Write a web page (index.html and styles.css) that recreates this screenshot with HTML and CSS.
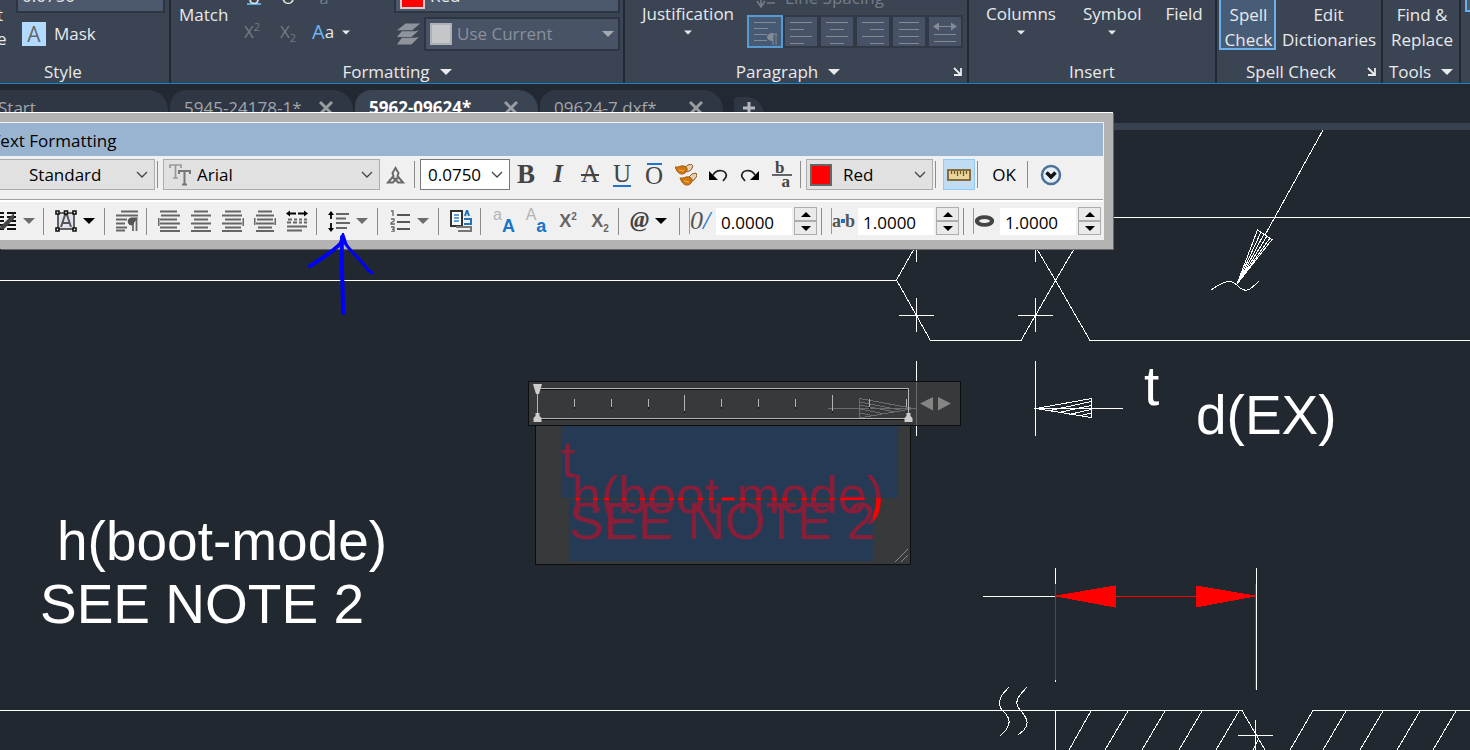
FILE: index.html
```html
<!DOCTYPE html>
<html lang="en">
<head>
<meta charset="utf-8">
<title>Text Editor</title>
<link rel="stylesheet" href="styles.css">
</head>
<body>
<svg class="defs" aria-hidden="true">
  <symbol id="caret" viewBox="0 0 12 6"><path d="M0 0h12L6 6z" fill="currentColor"/></symbol>
  <symbol id="chevron" viewBox="0 0 12 8"><path d="M1 1l5 5 5-5" fill="none" stroke="currentColor" stroke-width="1.3"/></symbol>
  <symbol id="launcher" viewBox="0 0 9 9"><path d="M1 1l6 6M8 1v7H1" fill="none" stroke="currentColor" stroke-width="1.8"/></symbol>
  <symbol id="close" viewBox="0 0 14 14"><path d="M1 1l12 12M13 1L1 13" fill="none" stroke="currentColor" stroke-width="3"/></symbol>
</svg>
<div class="app">
  <header class="ribbon">
    <section class="panel">
      <div class="panel-body style-body">
        <div class="clipped-label"><span>t</span><span>e</span></div>
        <div class="style-controls">
          <div class="combo combo-top"><select aria-label="Text height"><option>0.0750</option></select><svg class="caret dim"><use href="#caret"/></svg></div>
          <button class="mask"><span class="mask-icon">A</span>Mask</button>
        </div>
      </div>
      <h2 class="panel-title style-title">Style</h2>
    </section>
    <section class="panel">
      <div class="panel-body format-body">
        <button class="label-btn match">Match</button>
        <div class="glyphs">
          <button class="glyph under">U</button><button class="glyph over">O</button><button class="glyph faint small">a</button>
          <button class="glyph faint">X<sup>2</sup></button><button class="glyph faint">X<sub>2</sub></button>
          <button class="glyph case"><b>A</b><i>a</i><svg class="caret-sm"><use href="#caret"/></svg></button>
        </div>
        <div class="format-combos">
          <div class="combo combo-top"><span class="swatch red"></span><select aria-label="Colour"><option>Red</option></select></div>
          <div class="layer-row">
            <svg class="layers" viewBox="0 0 24 22" fill="#8f949a"><path d="M9 0h15l-8 7H0zM5 8h14l4-1-8 7H0zM5 15h14l4-1-8 8H0z"/></svg>
            <div class="combo combo-dim"><span class="swatch grey"></span><select aria-label="Layer"><option>Use Current</option></select><svg class="caret dim"><use href="#caret"/></svg></div>
          </div>
        </div>
      </div>
      <h2 class="panel-title">Formatting <svg class="caret"><use href="#caret"/></svg></h2>
    </section>
    <section class="panel">
      <div class="panel-body para-body">
        <button class="label-btn stacked">Justification<svg class="caret-sm"><use href="#caret"/></svg></button>
        <div class="para-tools">
          <button class="spacing-btn"><svg viewBox="0 0 20 20"><path d="M6 2v16M2 13l4 6 4-6M12 15h9M12 9h9" fill="none" stroke="#757b85" stroke-width="1.6"/></svg>Line Spacing</button>
          <div class="align-row">
            <button class="tile on" aria-label="Default"><svg viewBox="0 0 24 24"><path d="M1 2.500h22M1 8.500h14M1 14.500h13M1 20.500h13M20 14v12M23 14v12M17 14h7"/><path class="fill" d="M20 13c-8 0-8 8 0 8z"/></svg></button>
            <button class="tile" aria-label="Left"><svg viewBox="0 0 24 24"><path d="M1 2.500h22M1 9.500h14M1 16.500h22M1 23.500h14"/></svg></button>
            <button class="tile" aria-label="Center"><svg viewBox="0 0 24 24"><path d="M1 2.500h22M5 9.500h14M1 16.500h22M5 23.500h14"/></svg></button>
            <button class="tile" aria-label="Right"><svg viewBox="0 0 24 24"><path d="M1 2.500h22M9 9.500h14M1 16.500h22M9 23.500h14"/></svg></button>
            <button class="tile" aria-label="Justify"><svg viewBox="0 0 24 24"><path d="M2 2.500h20M2 9.500h20M2 16.500h20M2 23.500h20"/></svg></button>
            <button class="tile" aria-label="Distribute"><svg viewBox="0 0 24 24"><path d="M3 6.500h18M1 14.500h22M1 21.500h22"/><path class="fill" d="M0 6.500l6-4v8zM24 6.500l-6-4v8z"/></svg></button>
          </div>
        </div>
      </div>
      <h2 class="panel-title"><span class="grow">Paragraph <svg class="caret"><use href="#caret"/></svg></span><svg class="launcher"><use href="#launcher"/></svg></h2>
    </section>
    <section class="panel">
      <div class="panel-body insert-body">
        <button class="label-btn stacked">Columns<svg class="caret-sm"><use href="#caret"/></svg></button>
        <button class="label-btn stacked">Symbol<svg class="caret-sm"><use href="#caret"/></svg></button>
        <button class="label-btn stacked">Field</button>
      </div>
      <h2 class="panel-title">Insert</h2>
    </section>
    <section class="panel">
      <div class="panel-body spell-body">
        <button class="big-btn on">Spell Check</button>
        <button class="big-btn">Edit Dictionaries</button>
      </div>
      <h2 class="panel-title"><span class="grow">Spell Check</span><svg class="launcher"><use href="#launcher"/></svg></h2>
    </section>
    <section class="panel">
      <div class="panel-body tools-body"><button class="big-btn">Find &amp; Replace</button></div>
      <h2 class="panel-title">Tools <svg class="caret"><use href="#caret"/></svg></h2>
    </section>
    <section class="panel"><div class="edge-btn"></div></section>
  </header>

  <nav class="tabs">
    <div class="tab start">Start</div>
    <div class="tab">5945-24178-1*<svg class="close"><use href="#close"/></svg></div>
    <div class="tab active">5962-09624*<svg class="close"><use href="#close"/></svg></div>
    <div class="tab">09624-7.dxf*<svg class="close"><use href="#close"/></svg></div>
    <button class="new-tab" aria-label="New tab"><svg viewBox="0 0 14 14"><path d="M7 1v12M1 7h12" stroke="#b4b7ba" stroke-width="3"/></svg></button>
  </nav>

  <main class="canvas">
    <svg class="drawing" viewBox="0 130 1470 620">
      <g class="line">
        <path d="M1100 217.500H1470M0 280.500H896M896.500 280L914 249M896.500 280L930.500 340.500H1021L1055.500 280.500L1074 249M1037 249L1055.500 280.500L1090 340.500H1470"/>
        <path d="M899 315.500H934M916.500 298V332M1018 315.500H1053M1035.500 298V332M916.500 249V262M1035.500 249V262M916.500 361V436M1035.500 361V436"/>
        <path d="M1034 408.500H1123M1036 408.500L1091.500 398.500V417.500ZM1048 411L1091 401.500M1059 412.500L1091 405.500M1069 414.500L1091 409.500M1079 416L1091 413"/>
        <path d="M1323 130L1265 235M1257.500 230L1272 239.500L1237 284ZM1261 232L1238 282M1264 234L1239 281M1267 236L1240 280M1270 238L1243 276"/>
        <path d="M1211 290C1224 281 1231 278 1239 287C1246 294 1251 289 1259 281"/>
        <path d="M983 596.500H1055M1055.500 568V584M1055.500 680V682M1256.500 568V690"/>
        <path d="M1009 687L1002 695C998 701 999 708 1004 712C1011 719 1010 724 1006 730L1000 736M1027 687L1020 695C1015 701 1016 706 1021 711C1029 720 1028 725 1024 730L1018 735"/>
        <path d="M0 710.500H1242L1265 750M1055.500 710V750M1091 711L1069 750M1128 711L1105 750M1165 711L1142 750M1202 711L1179 750M1239 711L1216 750M1238 735.500H1273M1255.500 720V750M1258 740L1253 750"/>
        <path d="M1290 750L1313 710.500H1470M1346 711L1323 750M1383 711L1360 750M1420 711L1397 750M1456 711L1433 750"/>
      </g>
      <g class="dimension">
        <path d="M1055.500 584V680M1255.500 584V689M1056 596.500H1255"/>
        <path class="solid" d="M1056 596L1115 586V607ZM1255 596L1196 586V607Z"/>
      </g>
      <g class="cad-text">
        <text x="57" y="560">h(boot-mode)</text>
        <text x="40" y="623">SEE NOTE 2</text>
        <text x="1144" y="405">t</text>
        <text x="1196" y="434">d(EX)</text>
      </g>
      <g>
        <rect class="box" x="535.500" y="425.500" width="375" height="139"/>
        <g class="edit-text">
          <text x="561" y="477">t</text>
          <text x="572" y="513">h(boot-mode)</text>
          <text x="569" y="539">SEE NOTE 2</text>
        </g>
        <rect class="selection" x="561" y="426" width="337" height="72"/>
        <rect class="selection" x="569" y="500" width="304" height="61"/>
        <path class="grip" d="M895 562L908 549M901 562L908 555"/>
        <rect class="box" x="528.500" y="381.500" width="432" height="44"/>
        <path class="ghost" d="M828 408.500H916M916.500 382V425M859.500 398.500V418L914 408.500ZM860 402L905 411M860 405L895 412M860 409L885 414M860 413L875 416"/>
        <path class="shade" d="M538 389.500H908M538 419.500H908M574.500 407v2M611.500 407v2M648.500 407v2M684.500 411v2M721.500 407v2M758.500 407v2M795.500 407v2M832.500 411v2M869.500 407v2"/>
        <path class="ruler" d="M537.500 388.500H908.500V418.500H537.500ZM574.500 399v8M611.500 399v8M648.500 399v8M684.500 395v16M721.500 399v8M758.500 399v8M795.500 399v8M832.500 395v16M869.500 399v8M906.500 399v8"/>
        <path class="marker" d="M533 384h9l-3 10h-3zM533.500 422v-4l2-2v-3h4v3l2 2v4zM904.500 422v-4l2-2v-3h4v3l2 2v4z"/>
        <path class="arrows" d="M920 403.500L933 397V410.500ZM951 403.500L938 397V410.500Z"/>
      </g>
    </svg>
  </main>

  <div class="palette">
    <div class="palette-title">Text Formatting</div>
    <div class="bar">
      <div class="drop style-drop"><select aria-label="Style"><option>Standard</option></select><svg class="chevron"><use href="#chevron"/></svg></div>
      <span class="sep"></span>
      <div class="drop font-drop"><svg class="tt" viewBox="0 0 22 22"><path d="M1 4V1h11v3M6.500 1v13M4 14h5" fill="none" stroke="#999" stroke-width="1.700"/><path d="M10 10V7h11v3M15.500 7v13M13 20.500h5" fill="none" stroke="#777" stroke-width="2"/></svg><select aria-label="Font"><option>Arial</option></select><svg class="chevron"><use href="#chevron"/></svg></div>
      <button class="tool" aria-label="Annotative"><svg viewBox="0 0 22 22"><path d="M10.500 4L7.500 9l1 3L3 18.500h5l2.500-3 2.500 3h5L12.500 12l1-3zM8 14.500h5" fill="none" stroke="#6a6a6a" stroke-width="2"/></svg></button>
      <span class="sep"></span>
      <div class="drop size-drop"><select aria-label="Height"><option>0.0750</option></select><svg class="chevron"><use href="#chevron"/></svg></div>
      <button class="tool serif bold">B</button>
      <button class="tool serif italic">I</button>
      <button class="tool serif strike">A</button>
      <button class="tool serif ul">U</button>
      <button class="tool serif ol">O</button>
      <button class="tool" aria-label="Match format"><svg viewBox="0 0 22 22"><path d="M9 4l4-3 3-1 2 2-2 4-4 2zM13 14l4-4 4-1 1 3-3 4-3 1z" fill="#e8d0b8" stroke="#8c5a22"/><path d="M0 3c3 1 6-2 9-1 4 1 4 5 1 7-3 2-6 1-8-2zM5 14c3 1 6-2 9-1 4 1 4 5 1 7-3 2-6 1-8-2z" fill="#cf780f" stroke="#a0580a"/><path d="M4 6l5 1M9 17l5 1" stroke="#f0b45a"/></svg></button>
      <button class="tool" aria-label="Undo"><svg viewBox="0 0 22 22"><path d="M6 11c4-7 15-5 13 2l-3 4" fill="none" stroke="#222" stroke-width="1.700"/><path d="M2 7v9h9z"/></svg></button>
      <button class="tool" aria-label="Redo"><svg viewBox="0 0 22 22"><path d="M16 11C12 4 1 6 3 13l3 4" fill="none" stroke="#222" stroke-width="1.700"/><path d="M20 7v9h-9z"/></svg></button>
      <button class="tool fraction" aria-label="Stack"><span>b</span><span>a</span></button>
      <span class="sep"></span>
      <div class="drop color-drop"><span class="color-swatch"></span><select aria-label="Color"><option>Red</option></select><svg class="chevron"><use href="#chevron"/></svg></div>
      <span class="sep"></span>
      <button class="tool pressed" aria-label="Ruler"><svg class="wide" viewBox="0 0 24 14"><rect x="1" y="2" width="22" height="10" fill="#e8d69c" stroke="#80612f" stroke-width="1.800"/><path d="M4.500 3v3M7.500 3v3M10.500 3v5M13.500 3v3M16.500 3v5M19.500 3v3" stroke="#725727" stroke-width="1.300"/></svg></button>
      <span class="sep"></span>
      <button class="ok">OK</button>
      <span class="sep"></span>
      <button class="tool more" aria-label="Options"><svg viewBox="0 0 22 22"><circle cx="11" cy="11" r="9" fill="#e6eef7" stroke="#4b7199" stroke-width="2.500"/><path d="M6.500 8.500L11 13l4.500-4.500" fill="none" stroke="#111" stroke-width="3.500"/></svg></button>
    </div>
    <div class="bar second">
      <button class="tool first" aria-label="Columns"><svg viewBox="0 0 22 22"><path d="M1 3h8M1 7h8M1 11h8M1 15h8M1 19h8M12 3h9M12 7h9M12 11h9M12 15h9M12 19h9" stroke="#111" stroke-width="2"/><path d="M4 18L19 3v6L9 19H4z" fill="#444"/></svg><svg class="caret mid"><use href="#caret"/></svg></button>
      <span class="sep"></span>
      <button class="tool menu" aria-label="Justification"><svg viewBox="0 0 22 22"><path d="M3 3h16v16H3z" fill="#dfe3ee" stroke="#333" stroke-width="1.500"/><path d="M6 17l4-12h2l4 12M8 13h6" fill="none" stroke="#555" stroke-width="2"/><path d="M1 1h3v3H1zM9.500 1h3v3h-3zM18 1h3v3h-3zM1 18h3v3H1zM18 18h3v3h-3z" fill="#fff" stroke="#111" stroke-width="1.600"/></svg><svg class="caret"><use href="#caret"/></svg></button>
      <span class="sep"></span>
      <button class="tool w34" aria-label="Paragraph"><svg viewBox="0 0 22 22"><path d="M5 1.500h17M0 5.500h22M0 9.500h11M0 13.500h9M0 17.500h11M0 20.500h9M17 8v13M20.500 8v13" stroke="#666" stroke-width="1.800"/><path d="M22 7.500h-7c-5 1-4 8 1 8z" fill="#555"/></svg></button>
      <span class="sep"></span>
      <div class="group aligns">
        <button class="tool" aria-label="Align left"><svg class="lines" viewBox="0 0 22 22"><path d="M2 1.500h17M3 5.500h19M2 9.500h17M2 13.500h20M2 17.500h17M2 21h20M.5 8v8"/></svg></button>
        <button class="tool" aria-label="Align center"><svg class="lines" viewBox="0 0 22 22"><path d="M4 1.500h14M1 5.500h20M4 9.500h14M1 13.500h20M4 17.500h14M1 21h20"/></svg></button>
        <button class="tool" aria-label="Align right"><svg class="lines" viewBox="0 0 22 22"><path d="M3 1.500h16M0 5.500h20M3 9.500h16M0 13.500h20M3 17.500h16M0 21h20M21.500 8v8"/></svg></button>
        <button class="tool" aria-label="Justify"><svg class="lines" viewBox="0 0 22 22"><path d="M4 1.500h14M2 5.500h18M3 9.500h16M2 13.500h18M4 17.500h14M2 21h18M.5 8v7M21.500 8v7"/></svg></button>
        <button class="tool" aria-label="Distribute"><svg class="lines" viewBox="0 0 22 22"><path d="M1 16.500h20M1 20.500h15M2 9.500h4M8 9.500h3M13 9.500h3M18 9.500h3M1 12.500h4M7 12.500h4M13 12.500h3M18 12.500h3"/><path class="ends" d="M2 3.500h8M12 3.500h8"/><path class="heads" d="M0 3.500l4-3v6zM22 3.500l-4-3v6z"/></svg></button>
      </div>
      <span class="sep"></span>
      <button class="tool menu" aria-label="Line spacing"><svg viewBox="0 0 22 22"><path d="M3 2v7M3 13v7" stroke="#000" stroke-width="1.800"/><path d="M0 5l3-4 3 4zM0 18l3 4 3-4z"/><path d="M8 4h13M8 8.500h10M8 13h14M8 18h11" stroke="#666" stroke-width="2"/></svg><svg class="caret mid"><use href="#caret"/></svg></button>
      <span class="sep"></span>
      <button class="tool menu" aria-label="Numbering"><svg viewBox="0 0 22 22"><path d="M8 5h13M8 12h13M8 19h13" stroke="#555" stroke-width="2"/><path d="M2 1h2v5M2 9h3v2l-3 2v1h4M2 17h3v5H2M3 19.500h2" fill="none" stroke="#666" stroke-width="1.300"/></svg><svg class="caret mid"><use href="#caret"/></svg></button>
      <span class="sep"></span>
      <button class="tool w34" aria-label="Insert field"><svg viewBox="0 0 22 22"><path d="M1 1h11v15H1z" fill="#fff" stroke="#333" stroke-width="2"/><path d="M4 5h5M4 8h5M4 11h5" stroke="#2a83cf" stroke-width="1.500"/><path d="M15 6l2-6 2 6M14 9h7v5h-7" fill="none" stroke="#2273bd" stroke-width="2"/><path d="M6 17h15v4H8" fill="none" stroke="#777" stroke-width="2"/></svg></button>
      <span class="sep"></span>
      <div class="group cases">
        <button class="tool pair" aria-label="Uppercase"><small>a</small><b>A</b></button>
        <button class="tool pair" aria-label="Lowercase"><small>A</small><b>a</b></button>
        <button class="tool script"><span>X<sup>2</sup></span></button>
        <button class="tool script"><span>X<sub>2</sub></span></button>
      </div>
      <span class="sep"></span>
      <button class="tool menu at"><span>@</span><svg class="caret"><use href="#caret"/></svg></button>
      <span class="sep"></span>
      <label class="spin"><span class="spin-icon oblique">0<i>/</i></span><input type="text" value="0.0000" aria-label="Oblique angle"><span class="steps"><button aria-label="Up"><svg><use href="#caret"/></svg></button><button aria-label="Down"><svg><use href="#caret"/></svg></button></span></label>
      <span class="sep"></span>
      <label class="spin"><span class="spin-icon tracking">a<i></i>b</span><input type="text" value="1.0000" aria-label="Tracking"><span class="steps"><button aria-label="Up"><svg><use href="#caret"/></svg></button><button aria-label="Down"><svg><use href="#caret"/></svg></button></span></label>
      <span class="sep"></span>
      <label class="spin"><span class="spin-icon"><svg viewBox="0 0 22 14"><ellipse cx="11" cy="7" rx="8" ry="4" fill="#f0f0f0" stroke="#444" stroke-width="4"/><path d="M1.500 7a4 4 0 0 1 4-4v8a4 4 0 0 1-4-4zM20.500 7a4 4 0 0 0-4-4v8a4 4 0 0 0 4-4z" fill="#444"/></svg></span><input type="text" value="1.0000" aria-label="Width factor"><span class="steps"><button aria-label="Up"><svg><use href="#caret"/></svg></button><button aria-label="Down"><svg><use href="#caret"/></svg></button></span></label>
    </div>
  </div>

  <svg class="pointer" viewBox="0 0 72 84" aria-hidden="true"><path d="M36 4C35 30 37 52 37 80" stroke-width="4"/><path d="M4 33C15 26 27 19 36 9" stroke-width="4"/><path d="M37 7C44 19 55 26 62 37L66 40" stroke-width="3"/><path d="M34 12l3-10 3 9" stroke-width="3"/></svg>
</div>
</body>
</html>
```
FILE: styles.css
```css
* { box-sizing: border-box; }
body { margin: 0; font-family: "Open Sans", "Noto Sans", sans-serif; font-size: 17px; line-height: 24px; color: #e8eaec; background: #212830; }
button, select, input { font: inherit; color: inherit; margin: 0; padding: 0; border: 0; background: none; }
select { appearance: none; min-width: 0; flex: 1; outline: 0; }
button { white-space: nowrap; }
svg { display: block; flex: none; }
.defs { position: absolute; width: 0; height: 0; }
.app { position: relative; display: flex; flex-direction: column; height: 100vh; overflow: hidden; }

/* Ribbon */
.ribbon { display: grid; grid-template-columns: 169fr 452fr 342fr 246fr 164fr 76fr 9fr; gap: 2px; flex: none; background: #222933; border-bottom: 1px solid #1186c2; }
.panel { display: flex; flex-direction: column; min-width: 0; background: #3b4453; overflow: hidden; }
.panel-body { display: flex; align-items: flex-start; height: 60px; }
.panel-title { display: flex; align-items: center; justify-content: center; gap: 10px; margin: 0; height: 23px; font-size: 17px; font-weight: 400; }
.style-title { justify-content: flex-start; padding-left: 44px; }
.grow { flex: 1; display: flex; align-items: center; justify-content: center; gap: 10px; padding-left: 8px; }
.caret { width: 12px; height: 6px; }
.caret-sm { width: 8px; height: 5px; }
.dim { color: #a4a9b0; }
.launcher { width: 9px; height: 9px; margin-right: 5px; }
.label-btn { height: 24px; }
.combo { display: flex; align-items: center; gap: 5px; padding: 0 4px; height: 34px; background: #4c586c; border: 2px solid #2d3543; }
.combo-top { margin-top: -21px; }
.style-controls { flex: 1; display: flex; flex-direction: column; gap: 9px; padding-right: 4px; }
.clipped-label { display: flex; flex-direction: column; width: 16px; padding-top: 3px; text-indent: -3px; }
.mask { display: flex; align-items: center; gap: 8px; padding-left: 6px; }
.mask-icon { width: 24px; height: 24px; background: #b1dcff; color: #63676c; font-size: 21px; }
.format-body { padding: 0 3px 0 8px; }
.match { margin-top: 3px; width: 56px; text-align: left; }
.glyphs { display: grid; grid-template-columns: 36px 36px 50px; row-gap: 10px; margin-top: -14px; align-items: end; padding-left: 1px; }
.glyph { height: 24px; width: 32px; }
.glyph.faint { color: #757c87; }
.glyph sup, .glyph sub { font-size: 11px; line-height: 0; }
.under { border-bottom: 2px solid #59a9e8; width: 14px; justify-self: center; height: 19px; margin-bottom: 5px; }
.case { display: flex; align-items: center; width: 50px; font-size: 20px; padding-left: 4px; }
.case b { color: #6ab8f7; font-weight: 400; }
.case i { font-style: normal; font-size: 17px; margin-right: 8px; }
.format-combos { flex: 1; margin-left: 36px; min-width: 0; display: flex; flex-direction: column; gap: 4px; }
.swatch { width: 25px; height: 25px; border: 2px solid #d8d0d0; }
.red { background: #f00; }
.grey { width: 22px; height: 22px; background: #c4c6ca; border-color: #adb0b5; }
.layer-row { display: flex; align-items: center; gap: 4px; padding-left: 3px; }
.layers { width: 23px; height: 22px; }
.combo-dim { flex: 1; color: #89909b; background: #485366; }
.para-body { padding-left: 17px; }
.stacked { display: flex; flex-direction: column; align-items: center; gap: 4px; height: 40px; margin-top: 2px; }
.para-tools { display: flex; flex-direction: column; margin-left: 13px; }
.spacing-btn { display: flex; align-items: center; gap: 10px; margin-top: -14px; padding-left: 8px; color: #757c87; height: 24px; }
.spacing-btn svg { width: 20px; height: 20px; }
.align-row { display: flex; margin-top: 5px; }
.tile { width: 36px; height: 33px; display: flex; align-items: center; justify-content: center; background: #475266; border: 2px solid #313947; }
.tile svg { width: 24px; height: 26px; stroke: #858b95; fill: none; }
.tile .fill { fill: #858b95; stroke: none; }
.tile.on { background: #465a75; border-color: #579ad0; }
.insert-body { padding-left: 17px; gap: 27px; }
.insert-body .stacked:last-child { margin-left: -3px; }
.spell-body { padding-left: 2px; gap: 6px; }
.big-btn { white-space: normal; line-height: 25px; height: 50px; padding-top: 2px; }
.spell-body .big-btn { width: 57px; }
.spell-body .big-btn.on { padding-left: 2px; }
.spell-body .big-btn + .big-btn { flex: 1; margin-right: 6px; }
.big-btn.on { background: #475c76; border: 2px solid #6bb0ea; border-top: 0; }
.tools-body { justify-content: center; padding-left: 2px; }
.tools-body .big-btn { width: 70px; }
.edge-btn { height: 12px; margin-left: 4px; border: solid #6bb0ea; border-width: 0 0 2px 2px; background: #475c76; }

/* Document tabs */
.tabs { display: flex; flex: none; height: 46px; padding-top: 6px; gap: 2px; background: #222933; border-bottom: 7px solid #38414f; }
.tab { display: flex; align-items: center; justify-content: space-between; width: 183px; padding: 2px 20px 0 14px; background: #2f3744; color: #a2a6ab; border-radius: 16px 20px 0 0; }
.tab.start { width: 168px; padding-left: 0; border-top-left-radius: 0; text-indent: -2px; }
.tab.active { background: #3b4453; color: #fff; font-weight: 700; }
.close { width: 14px; height: 14px; color: #999da2; }
.new-tab { display: flex; justify-content: center; width: 30px; height: 26px; margin: 7px 0 0 9px; padding-top: 4px; background: #2f3744; border-radius: 4px 18px 0 0; }
.new-tab svg { width: 14px; height: 14px; }

/* Drawing area */
.canvas { flex: 1; min-height: 0; overflow: hidden; }
.drawing { width: 100%; height: auto; }
.line, .dimension { fill: none; stroke: #fff; stroke-width: 1; shape-rendering: crispEdges; }
.dimension { stroke: #f00; }
.solid { fill: #f00; }
.cad-text { font: 55px "Liberation Sans", Arial, sans-serif; fill: #fff; }
.edit-text { font: 52px "Liberation Sans", Arial, sans-serif; fill: #f00; }
.box { fill: #38393a; stroke: #0b0d0f; }
.selection { fill: rgba(18, 60, 112, .5); }
.grip { stroke: #888; }
.ghost { fill: none; stroke: #6a6b6c; shape-rendering: crispEdges; }
.shade { fill: none; stroke: #111; }
.ruler { fill: none; stroke: #b4b4b4; }
.marker { fill: #ccc; }
.arrows { fill: #858585; }

/* Floating toolbar */
.palette { position: absolute; left: 0; top: 112px; padding-right: 1px; background: #f0f0f0; color: #000; border: 9px solid #b3b3b3; border-left: 0; border-top-width: 10px; box-shadow: inset 0 1px #f0f0f0, 1px 1px #686868; outline: 0; }
.palette::before { content: ""; position: absolute; left: 0; right: -9px; top: -10px; height: 1px; background: #fff; }
.palette-title { height: 33px; padding-top: 6px; margin-top: 1px; text-indent: -9px; background: #99b4d1; }
.bar { display: flex; align-items: center; height: 44px; padding-bottom: 6px; border-bottom: 1px solid #a0a0a0; }
.bar.second { height: 40px; padding: 0; border: 0; border-top: 2px solid #fff; }
.sep { width: 1px; height: 27px; flex: none; margin: 0 5px 0 2px; background: #8c8c8c; }
.drop { display: flex; align-items: center; height: 31px; padding: 0 6px 0 7px; background: #e1e1e1; border: 1px solid #adadad; }
.style-drop { width: 155px; padding-left: 29px; border-left: 0; }
.font-drop { width: 217px; padding-left: 5px; gap: 6px; }
.size-drop { width: 90px; background: #fff; border-color: #7a7a7a; }
.color-drop { width: 127px; padding-left: 3px; gap: 11px; }
.chevron { width: 12px; height: 8px; color: #444; }
.tt { width: 22px; height: 22px; }
.color-swatch { width: 22px; height: 22px; background: #f00; border: 2px solid #666; }
.tool { display: flex; align-items: center; justify-content: center; flex: none; width: 32px; height: 31px; color: #444; }
.tool svg:first-child { width: 22px; height: 22px; }
.tool .wide:first-child { width: 26px; height: 14px; }
.tool .caret { color: #000; }
.tool .mid { color: #6d6d6d; }
.serif { font: 25px/22px "Liberation Serif", serif; padding-bottom: 2px; }
.bold { font-size: 27px; font-weight: 700; }
.italic { font-style: italic; font-weight: 700; }
.strike { text-decoration: line-through; text-decoration-thickness: 2px; }
.ul { text-decoration: underline #2273c9 2px; text-underline-offset: 3px; }
.ol { padding: 3px 0 0; background: linear-gradient(#2273c9, #2273c9) center 4px / 15px 2px no-repeat; }
.fraction { flex-direction: column; padding-bottom: 2px; font: bold 17px/11px "Liberation Serif", serif; }
.fraction span { width: 20px; height: 12px; text-align: left; padding-left: 3px; }
.fraction span + span { border-top: 2px solid #666; text-align: right; padding-right: 2px; }
.pressed { margin-left: 2px; background: #c0dcf3; border: 1px solid #90c8f6; }
.ok { width: 42px; height: 31px; }
.more { width: 36px; }
.first { width: 41px; justify-content: flex-start; gap: 6px; }
.first svg:first-child { margin-left: -5px; }
.menu { width: 53px; justify-content: flex-start; gap: 6px; padding-left: 6px; }
.w34 { width: 34px; }
.group { display: flex; padding-left: 2px; }
.aligns { padding: 0 1px; }
.lines { fill: none; stroke: #666; stroke-width: 2; }
.ends { stroke: #000; }
.heads { fill: #000; stroke: none; }
.pair { font: 18px/22px "Liberation Sans", sans-serif; }
.pair small { font-size: 16px; line-height: 18px; color: #b4b4b4; align-self: flex-start; }
.pair b { color: #1b74ca; align-self: flex-end; }
.script { font: bold 18px/22px "Liberation Sans", sans-serif; color: #666; }
.script sup, .script sub { font-size: 10px; line-height: 0; }
.at { font: italic 23px/22px "Liberation Serif", serif; font-weight: 700; }
.at span { padding-bottom: 3px; }
.spin { display: flex; align-items: center; width: 134px; padding-left: 4px; }
.spin-icon { display: flex; align-items: center; width: 22px; height: 26px; margin-right: 5px; border-left: 1px solid #999; color: #555; }
.spin-icon svg { width: 21px; height: 14px; }
.oblique { font: italic 26px/24px "Liberation Serif", serif; }
.oblique i { color: #1b74ca; }
.tracking { font: bold 18px/24px "Liberation Serif", serif; }
.tracking i { width: 4px; height: 4px; flex: none; background: #1b74ca; }
.spin input { width: 76px; height: 27px; padding: 3px 0 0 5px; background: #fff; margin-right: 2px; }
.steps { display: flex; flex-direction: column; width: 23px; }
.steps button { height: 14px; display: flex; align-items: center; justify-content: center; background: #eaeaea; border: 1px solid #adadad; color: #000; }
.steps svg { width: 10px; height: 5px; }
.steps button:first-child svg { transform: rotate(180deg); }

.pointer { position: absolute; left: 306px; top: 233px; width: 72px; height: 84px; fill: none; stroke: #00f; stroke-linecap: round; }
```
